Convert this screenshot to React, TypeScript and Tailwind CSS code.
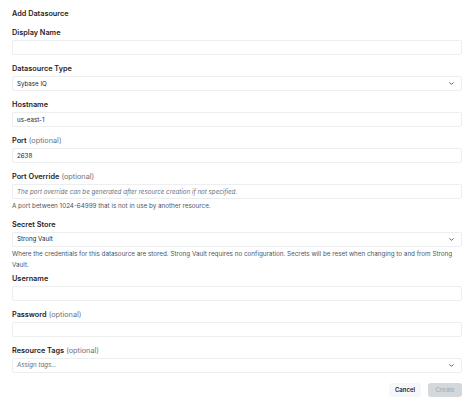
import { ReactNode } from "react";

function Chevron() {
  return (
    <svg
      viewBox="0 0 12 12"
      className="h-[7px] w-[7px] text-[#2f5f7d]"
      fill="none"
      stroke="currentColor"
      strokeWidth={1.6}
      strokeLinecap="round"
      strokeLinejoin="round"
    >
      <path d="M3 4.5 6 7.5l3-3" />
    </svg>
  );
}

function Label({ text, optional }: { text: string; optional?: boolean }) {
  return (
    <div className="mb-[2px] h-[10px] text-[7.3px] leading-[10px] font-semibold text-[#1f2328]">
      {text}
      {optional && <span className="font-normal text-[#6b7280]"> (optional)</span>}
    </div>
  );
}

function Box({ children, select }: { children?: ReactNode; select?: boolean }) {
  return (
    <div className="flex h-[15px] items-center justify-between rounded-[2px] border border-[#eceef0] bg-white pr-[6px] pl-[4px] text-[6.2px] text-[#1f2328]">
      <div>{children}</div>
      {select && <Chevron />}
    </div>
  );
}

function Help({ children }: { children: ReactNode }) {
  return (
    <p className="mt-[2px] text-[6.3px] leading-[11.5px] text-[#4b5563]">{children}</p>
  );
}

export default function App() {
  return (
    <div
      className="h-[405px] w-[474px] bg-white px-3 pt-[9px]"
      style={{ fontFamily: "Inter, 'Liberation Sans', sans-serif" }}
    >
      <h1 className="h-[10px] text-[7.3px] leading-[10px] font-semibold text-[#1f2328]">
        Add Datasource
      </h1>

      <div className="mt-[9px] flex flex-col gap-[9px]">
        <div>
          <Label text="Display Name" />
          <Box />
        </div>
        <div>
          <Label text="Datasource Type" />
          <Box select>Sybase IQ</Box>
        </div>
        <div>
          <Label text="Hostname" />
          <Box>us-east-1</Box>
        </div>
        <div>
          <Label text="Port" optional />
          <Box>2638</Box>
        </div>
        <div>
          <Label text="Port Override" optional />
          <Box>
            <span className="text-[#6b7280] italic">
              The port override can be generated after resource creation if not specified.
            </span>
          </Box>
          <Help>A port between 1024-64999 that is not in use by another resource.</Help>
        </div>
        <div className="-mt-[2px]">
          <Label text="Secret Store" />
          <Box select>Strong Vault</Box>
          <Help>
            Where the credentials for this datasource are stored. Strong Vault requires no
            configuration. Secrets will be reset when changing to and from Strong Vault.
          </Help>
        </div>
        <div className="-mt-[7px]">
          <Label text="Username" />
          <Box />
        </div>
        <div>
          <Label text="Password" optional />
          <Box />
        </div>
        <div>
          <Label text="Resource Tags" optional />
          <Box select>
            <span className="text-[#6b7280] italic">Assign tags...</span>
          </Box>
        </div>
      </div>

      <div className="mt-[10px] flex justify-end gap-[7px]">
        <button className="h-[14px] w-[32px] rounded-[3px] bg-[#f6f7f8] text-[6px] font-semibold text-[#1f2328]">
          Cancel
        </button>
        <button className="h-[14px] w-[34px] rounded-[3px] bg-[#d3d8dc] text-[6px] font-medium text-[#a4acb3]">
          Create
        </button>
      </div>
    </div>
  );
}
